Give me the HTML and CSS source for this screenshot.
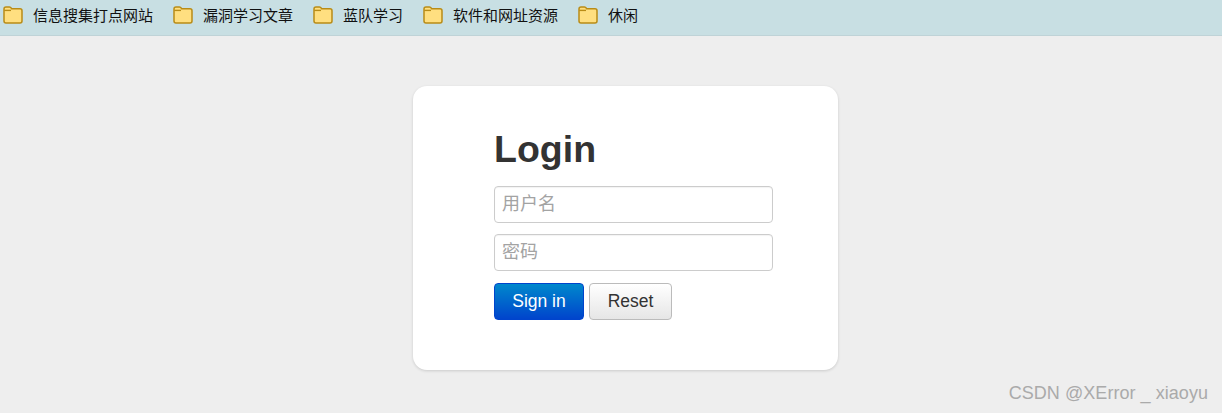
FILE: index.html
```html
<!DOCTYPE html>
<html>
<head>
    <title>Login</title>
    <link rel="stylesheet" href="styles.css">
</head>
<body>
    <svg class="icon-defs">
        <symbol id="folder" viewBox="0 0 20 18">
            <path d="M1 15V3c0-1.200.8-2 2-2h3.500c.9 0 1.300.4 1.800 1.200l.3.5H17c1.200 0 2 .8 2 2V15c0 1.200-.8 2-2 2H3c-1.200 0-2-.8-2-2z" fill="#ffdf80" stroke="#b98c16" stroke-width="1.500"/>
            <path d="M1.200 4.400h6.800" fill="none" stroke="#b98c16" stroke-width="1.400"/>
        </symbol>
    </svg>

    <div class="bookmarks">
        <div class="bookmark"><svg class="folder"><use href="#folder"/></svg><span>信息搜集打点网站</span></div>
        <div class="bookmark"><svg class="folder"><use href="#folder"/></svg><span>漏洞学习文章</span></div>
        <div class="bookmark"><svg class="folder"><use href="#folder"/></svg><span>蓝队学习</span></div>
        <div class="bookmark"><svg class="folder"><use href="#folder"/></svg><span>软件和网址资源</span></div>
        <div class="bookmark"><svg class="folder"><use href="#folder"/></svg><span>休闲</span></div>
    </div>

    <div class="login-container">
        <h2 class="login-title">Login</h2>
        <input class="login-input" type="text" placeholder="用户名">
        <input class="login-input" type="password" placeholder="密码">
        <div class="button-group">
            <button class="btn btn-primary">Sign in</button>
            <button class="btn btn-default">Reset</button>
        </div>
    </div>

    <div class="watermark">CSDN @XError<span class="watermark-sep">_</span>xiaoyu</div>
</body>
</html>
```

FILE: styles.css
```css
body {
    margin: 0;
    height: 413px;
    overflow: hidden;
    background-color: #eee;
    font-family: "Liberation Sans", "Noto Sans CJK SC", sans-serif;
}

.icon-defs {
    display: none;
}

.bookmarks {
    display: flex;
    align-items: center;
    gap: 20px;
    height: 29px;
    padding: 0 0 6px 3px;
    background-color: #c8dfe3;
    border-bottom: 1px solid #bfd3d7;
}

.bookmark {
    display: flex;
    align-items: center;
    gap: 10px;
    font-size: 15px;
    color: #111;
}

.folder {
    width: 20px;
    height: 18px;
}

.login-container {
    width: 344px;
    height: 284px;
    margin: 50px 0 0 413px;
    padding-left: 81px;
    background-color: #fff;
    border-radius: 14px;
    box-shadow: 0 1px 3px rgba(0, 0, 0, 0.15);
    overflow: hidden;
}

.login-title {
    margin: 42px 0 15px;
    font-size: 37.500px;
    line-height: 43px;
    font-weight: bold;
    color: #333;
}

.login-input {
    display: block;
    width: 279px;
    height: 37px;
    margin-bottom: 11px;
    padding: 0 7px;
    box-sizing: border-box;
    border: 1px solid #ccc;
    border-radius: 4px;
    font-family: "Liberation Sans", "Noto Sans CJK SC", sans-serif;
    font-size: 18px;
    box-shadow: inset 0 1px 1px rgba(0, 0, 0, 0.05);
}

.login-input::placeholder {
    color: #a3a3a3;
}

.button-group {
    display: flex;
    gap: 5px;
    margin-top: 12px;
}

.btn {
    height: 37px;
    box-sizing: border-box;
    border-radius: 4px;
    font-family: "Liberation Sans", sans-serif;
    font-size: 17.500px;
    padding: 0;
}

.btn-primary {
    width: 90px;
    color: #fff;
    border: 1px solid #04c;
    background: linear-gradient(to bottom, #0088cc, #0044cc);
}

.btn-default {
    width: 83px;
    color: #333;
    border: 1px solid #bbb;
    background: linear-gradient(to bottom, #fff, #e6e6e6);
}

.watermark {
    position: absolute;
    right: 14px;
    top: 383px;
    font-size: 18px;
    line-height: 21px;
    letter-spacing: 0.05px;
    color: #aaa;
}

.watermark-sep {
    margin: 0 5px;
}
```
